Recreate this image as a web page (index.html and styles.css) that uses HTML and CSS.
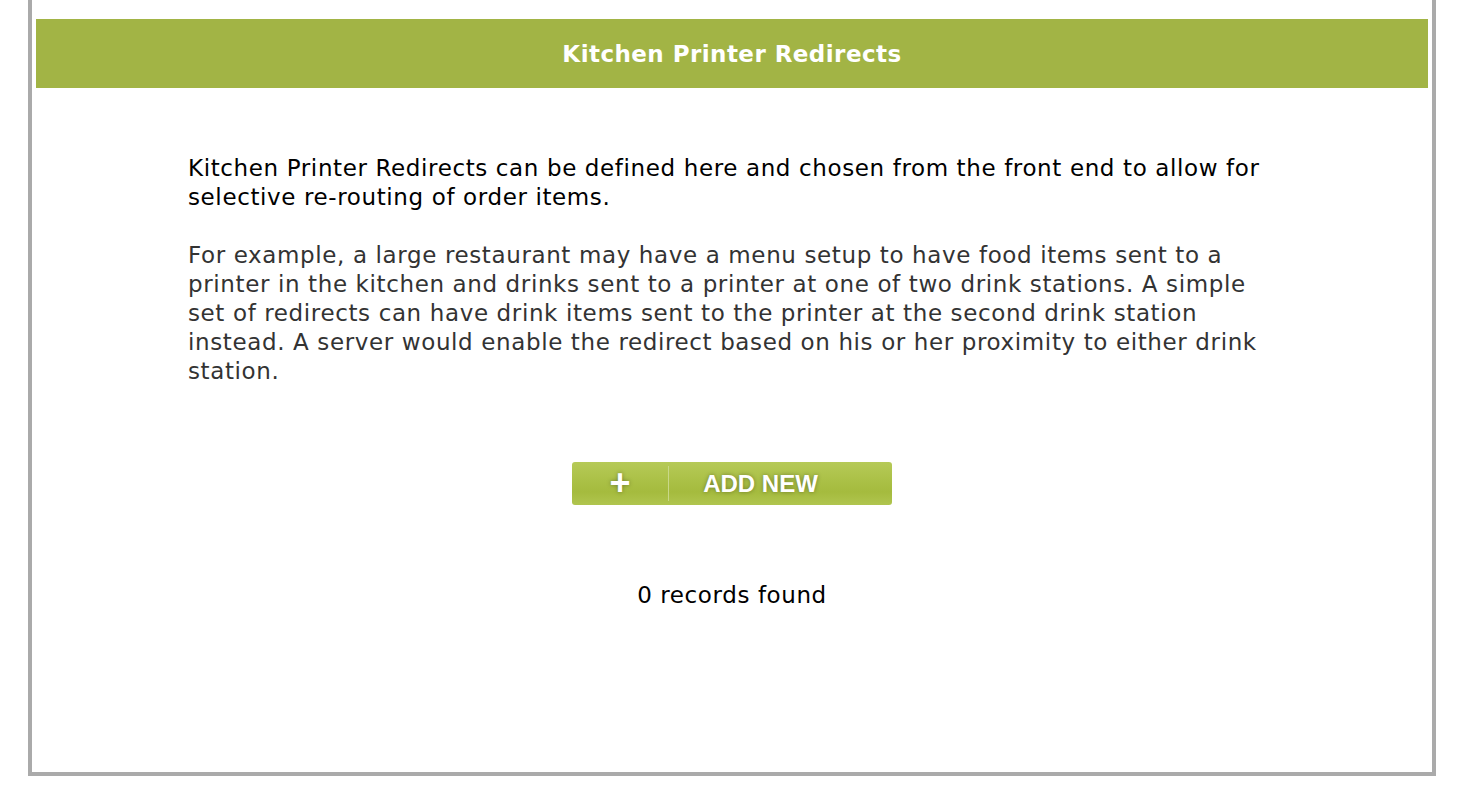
FILE: index.html
```html
<!DOCTYPE html>
<html lang="en">
<head>
<meta charset="utf-8">
<title>Kitchen Printer Redirects</title>
<link rel="stylesheet" href="styles.css">
</head>
<body>
<div class="panel">
  <div class="panel-header">Kitchen Printer Redirects</div>
  <div class="panel-body">
    <div class="intro">
      <p class="lead">Kitchen Printer Redirects can be defined here and chosen from the front end to allow for selective re-routing of order items.</p>
      <p class="example">For example, a large restaurant may have a menu setup to have food items sent to a printer in the kitchen and drinks sent to a printer at one of two drink stations. A simple set of redirects can have drink items sent to the printer at the second drink station instead. A server would enable the redirect based on his or her proximity to either drink station.</p>
    </div>
    <button class="add-btn" type="button">
      <span class="add-icon">+</span>
      <span class="add-label">ADD NEW</span>
    </button>
    <div class="records">0 records found</div>
  </div>
</div>
</body>
</html>
```
FILE: styles.css
```css
html, body {
  margin: 0;
  padding: 0;
  background: #fff;
}

body {
  font-family: "DejaVu Sans", Verdana, sans-serif;
}

.panel {
  margin: 0 0 0 28px;
  width: 1408px;
  height: 776px;
  box-sizing: border-box;
  border: 4px solid #aaaaaa;
  border-top: none;
  padding: 19px 4px 0;
  display: flex;
  flex-direction: column;
}

.panel-header {
  height: 69px;
  background: #a2b445;
  color: #fff;
  font-weight: bold;
  font-size: 23px;
  letter-spacing: 0.45px;
  display: flex;
  align-items: center;
  justify-content: center;
}

.panel-body {
  display: flex;
  flex-direction: column;
  align-items: center;
  padding-top: 66px;
}

.intro {
  width: 1088px;
  font-size: 23px;
  letter-spacing: 0.62px;
  line-height: 29px;
}

.intro p {
  margin: 0 0 29px;
}

.intro p.example {
  margin-bottom: 0;
}

.lead {
  color: #000;
}

.example {
  color: #333;
}

.add-btn {
  margin-top: 76px;
  width: 320px;
  height: 43px;
  border: none;
  border-radius: 3px;
  padding: 0;
  background: linear-gradient(to bottom, #b6ca57 0%, #a9bf44 50%, #a5bb3e 70%, #b0c54f 100%);
  display: flex;
  align-items: stretch;
  color: #fff;
  font-family: "Liberation Sans", Arial, sans-serif;
  font-weight: bold;
  text-shadow: 0 0 4px rgba(0, 0, 0, 0.35);
  cursor: pointer;
}

.add-icon {
  width: 97px;
  display: flex;
  align-items: center;
  justify-content: center;
  font-size: 36px;
  line-height: 1;
  padding-bottom: 2px;
  box-sizing: border-box;
  border-right: 1px solid #c9d888;
  margin: 4px 0;
}

.add-label {
  flex: 1;
  display: flex;
  align-items: center;
  justify-content: center;
  font-size: 24px;
  padding-right: 40px;
}

.records {
  margin-top: 76px;
  font-size: 23px;
  letter-spacing: 0.6px;
  line-height: 29px;
  color: #000;
}
```
